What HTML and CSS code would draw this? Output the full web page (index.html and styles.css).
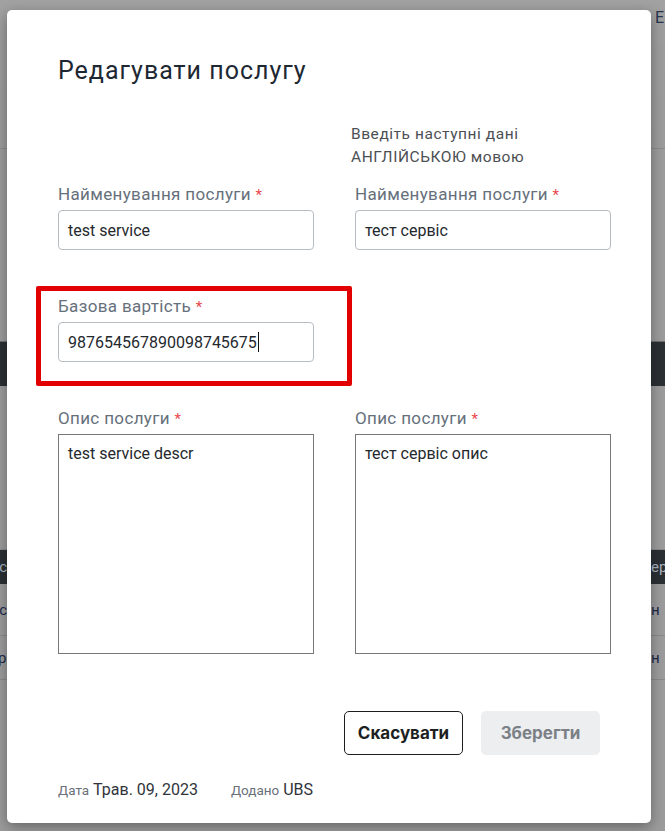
FILE: index.html
```html
<!DOCTYPE html>
<html lang="uk">
<head>
<meta charset="utf-8">
<title>Редагувати послугу</title>
<link rel="stylesheet" href="styles.css">
</head>
<body>
<div class="page">
  <div class="top">
    <span class="top-e">E</span>
  </div>
  <div class="gap1"></div>
  <div class="band"></div>
  <div class="gap2"></div>
  <div class="band row">
    <span class="cell-left light">Опис</span>
    <span class="cell-right light">ерв</span>
  </div>
  <div class="trow row">
    <span class="cell-left">Опис</span>
    <span class="cell-right">н</span>
  </div>
  <div class="trow row last">
    <span class="cell-left wide">Тipо</span>
    <span class="cell-right">н</span>
  </div>
</div>

<div class="modal">
  <h1 class="title">Редагувати послугу</h1>

  <div class="grid">
    <div class="cell"></div>
    <div class="cell hint">Введіть наступні дані<br>АНГЛІЙСЬКОЮ мовою</div>
  </div>

  <div class="grid row-name">
    <div class="field">
      <div class="label">Найменування послуги <span class="req">*</span></div>
      <div class="input">test service</div>
    </div>
    <div class="field">
      <div class="label">Найменування послуги <span class="req">*</span></div>
      <div class="input">тест сервіс</div>
    </div>
  </div>

  <div class="grid row-price">
    <div class="field">
      <div class="label">Базова вартість <span class="req">*</span></div>
      <div class="input">987654567890098745675<span class="caret"></span></div>
    </div>
    <div class="field"></div>
  </div>

  <div class="grid row-desc">
    <div class="field">
      <div class="label">Опис послуги <span class="req">*</span></div>
      <div class="textarea">test service descr</div>
    </div>
    <div class="field">
      <div class="label">Опис послуги <span class="req">*</span></div>
      <div class="textarea">тест сервіс опис</div>
    </div>
  </div>

  <div class="actions">
    <button class="btn btn-cancel">Скасувати</button>
    <button class="btn btn-save">Зберегти</button>
  </div>

  <div class="meta">
    <span class="meta-item"><span class="meta-key">Дата</span> <span class="meta-val">Трав. 09, 2023</span></span>
    <span class="meta-item"><span class="meta-key">Додано</span> <span class="meta-val">UBS</span></span>
  </div>

  <div class="highlight"></div>
</div>
</body>
</html>
```

FILE: styles.css
```css
* { box-sizing: border-box; }
html, body {
  margin: 0;
  padding: 0;
  width: 665px;
  height: 831px;
  overflow: hidden;
}
body {
  background: #9c9c9c;
  font-family: Roboto, "Liberation Sans", sans-serif;
  position: relative;
}

/* background page (dimmed) */
.page {
  display: flex;
  flex-direction: column;
}
.top {
  height: 149px;
  border-bottom: 1px solid #8b8b8b;
  background: linear-gradient(#a2a2a2 0, #9d9d9d 50px, #9c9c9c 100%);
  display: flex;
  justify-content: flex-end;
  padding-top: 8px;
}
.top-e {
  font-size: 16px;
  color: #2a3550;
  width: 10px;
  overflow: hidden;
  line-height: 20px;
}
.gap1 { height: 192px; }
.band {
  height: 45px;
  background: #2b3034;
  border-top: 1px solid #6f6f6f;
}
.gap2 {
  height: 164px;
  border-bottom: 1px solid #8b8b8b;
}
.row {
  display: flex;
  justify-content: space-between;
  align-items: center;
  font-size: 15px;
}
.band.row { height: 34px; border-top: none; }
.trow {
  height: 52px;
  border-bottom: 1px solid #8a8a8a;
  color: #1d2a4a;
}
.trow.last { height: 44px; }
.cell-left {
  width: 7px;
  overflow: hidden;
  direction: rtl;
  white-space: nowrap;
}
.cell-left.wide { width: 15px; }
.cell-right {
  width: 14px;
  overflow: hidden;
  white-space: nowrap;
}
.light { color: #aab4c0; }

/* modal */
.modal {
  position: absolute;
  left: 7px;
  top: 10px;
  width: 644px;
  height: 813px;
  background: #fff;
  border-radius: 5px;
  box-shadow: 0 4px 14px rgba(0,0,0,0.35);
  padding: 46px 40px 0 51px;
}
.title {
  margin: 0;
  font-size: 25px;
  letter-spacing: 1px;
  font-weight: 400;
  line-height: 30px;
  color: #1e2833;
}
.grid {
  display: grid;
  grid-template-columns: 256px 256px;
  column-gap: 41px;
}
.hint {
  margin-top: 37px;
  margin-left: -4px;
  font-size: 15.5px;
  letter-spacing: 0.55px;
  line-height: 23px;
  color: #4c4f54;
  white-space: nowrap;
}
.row-name { margin-top: 15px; }
.row-price { margin-top: 46px; }
.row-desc { margin-top: 46px; }
.field {
  display: flex;
  flex-direction: column;
}
.label {
  font-size: 17px;
  letter-spacing: 0.35px;
  line-height: 20px;
  color: #66707b;
  margin-bottom: 5px;
  white-space: nowrap;
}
.req { color: #e8484b; font-size: 15px; letter-spacing: 0; }
.input {
  height: 40px;
  border: 1px solid #b7bcc2;
  border-radius: 4px;
  padding: 0 9px;
  font-size: 16px;
  color: #25292e;
  display: flex;
  align-items: center;
  white-space: nowrap;
}
.caret {
  display: inline-block;
  width: 1px;
  height: 20px;
  background: #111;
  margin-left: 1px;
}
.textarea {
  height: 220px;
  border: 1px solid #777;
  padding: 9px 9px;
  font-size: 16px;
  line-height: 19px;
  color: #25292e;
}
.actions {
  display: flex;
  justify-content: flex-end;
  gap: 18px;
  margin-top: 57px;
  padding-right: 11px;
}
.btn {
  width: 119px;
  height: 44px;
  font-family: Inter, Roboto, sans-serif;
  font-size: 17px;
  font-weight: 700;
  border-radius: 5px;
  padding: 0;
}
.btn-cancel {
  background: #fff;
  border: 1px solid #1d1d1d;
  color: #1d1f22;
}
.btn-save {
  background: #eceef0;
  border: none;
  color: #7b8086;
}
.meta {
  display: flex;
  gap: 33px;
  margin-top: 25px;
  align-items: baseline;
}
.meta-key {
  font-size: 13.5px;
  color: #6a717a;
}
.meta-val {
  font-size: 16px;
  color: #30343a;
}

/* annotation box drawn on top */
.highlight {
  position: absolute;
  left: 29px;
  top: 276px;
  width: 316px;
  height: 100px;
  border: 5px solid #e20000;
  border-radius: 2px;
  pointer-events: none;
}
```
